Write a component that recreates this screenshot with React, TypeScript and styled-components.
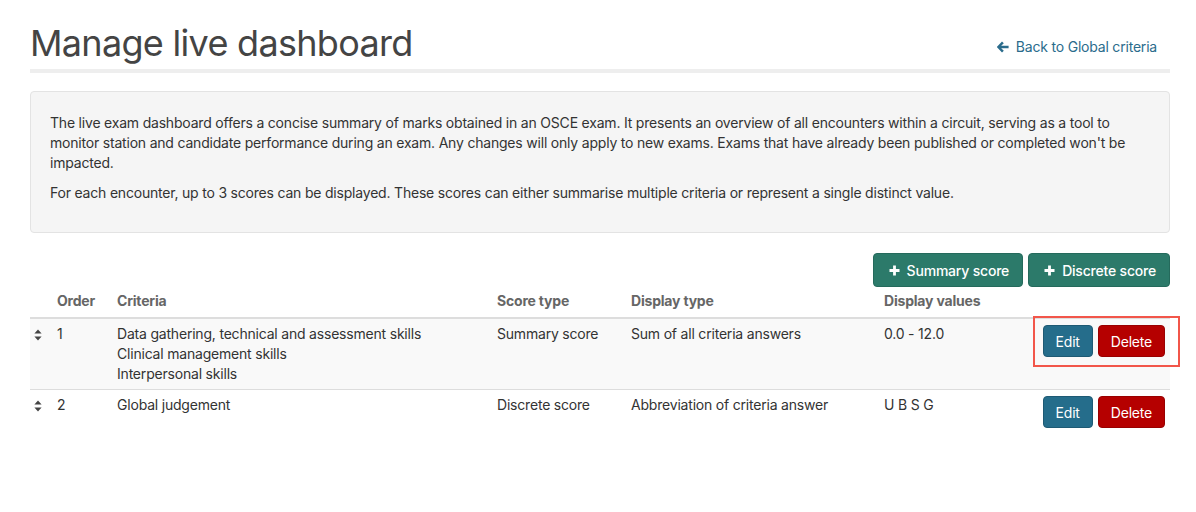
import * as React from "react"
import styled, { createGlobalStyle, css } from "styled-components"

const GlobalStyle = createGlobalStyle`
  html, body {
    margin: 0;
    padding: 0;
    background: #fff;
  }
  body {
    font-family: Inter, "Liberation Sans", Arial, sans-serif;
    font-size: 14px;
    letter-spacing: -0.2px;
    color: #333;
  }
`

const Page = styled.div`
  width: 1140px;
  padding: 22px 30px 0;
`

const Header = styled.div`
  display: flex;
  align-items: flex-end;
  justify-content: space-between;
  padding-bottom: 5px;
  border-bottom: 4px solid #eeeeee;
`

const Title = styled.h1`
  margin: 0;
  font-size: 36px;
  font-weight: 400;
  letter-spacing: -0.7px;
  color: #444;
  line-height: 42px;
`

const BackLink = styled.a`
  display: flex;
  align-items: center;
  gap: 7px;
  margin-right: 13px;
  margin-bottom: 9px;
  color: #2b6c8c;
  font-size: 14px;
  text-decoration: none;
`

const InfoBox = styled.div`
  margin-top: 18px;
  padding: 21px 19px 19px;
  background: #f5f5f5;
  border: 1px solid #e3e3e3;
  border-radius: 4px;
  min-height: 98px;

  p {
    margin: 0 0 10px;
    line-height: 20px;
  }
`

const Toolbar = styled.div`
  display: flex;
  justify-content: flex-end;
  gap: 5px;
  margin-top: 20px;
`

type Tone = "green" | "blue" | "red"

const tones: Record<Tone, { bg: string; border: string }> = {
  green: { bg: "#2c7a6a", border: "#256a5c" },
  blue: { bg: "#256d8b", border: "#1e5a74" },
  red: { bg: "#b50000", border: "#990000" },
}

const Button = styled.button<{ tone: Tone; tall?: boolean }>`
  display: inline-flex;
  align-items: center;
  justify-content: center;
  gap: 7px;
  font-family: inherit;
  font-size: 14px;
  letter-spacing: inherit;
  color: #fff;
  border-radius: 4px;
  cursor: pointer;
  ${({ tone }) => css`
    background: ${tones[tone].bg};
    border: 1px solid ${tones[tone].border};
  `}
  ${({ tall }) =>
    tall
      ? css`
          height: 34px;
          padding: 0 13px 0 15px;
          font-weight: 500;
        `
      : css`
          height: 32px;
          padding: 0 12px;
        `}
`

const Table = styled.table`
  width: 100%;
  border-collapse: collapse;
`

const Th = styled.th`
  text-align: left;
  font-weight: 700;
  color: #666;
  padding: 4px 8px 6px;
  border-bottom: 2px solid #dddddd;
  line-height: 20px;
`

const Row = styled.tr<{ shaded?: boolean }>`
  background: ${({ shaded }) => (shaded ? "#f9f9f9" : "#fff")};
  border-bottom: 1px solid #dddddd;
  &:last-child {
    border-bottom: none;
  }
`

const Td = styled.td`
  vertical-align: top;
  padding: 5px 8px;
  line-height: 20px;
  color: #333;
`

const HandleCell = styled(Td)`
  width: 11px;
  padding: 7px 0 0 4px;
`

const ActionCell = styled(Td)`
  padding: 6px 5px 10px 0;
  text-align: right;
  white-space: nowrap;
`

const Actions = styled.div`
  position: relative;
  display: inline-flex;
  gap: 5px;
`

const Highlight = styled.div`
  position: absolute;
  top: -9px;
  left: -10px;
  right: -15px;
  bottom: -10px;
  border: 2px solid #f2564a;
  pointer-events: none;
`

const SortIcon = () => (
  <svg width="8" height="12" viewBox="0 0 8 12">
    <path d="M4 0.5 L7.6 4.6 H0.4 Z" fill="#444" />
    <path d="M4 11.5 L7.6 7.4 H0.4 Z" fill="#444" />
  </svg>
)

const ArrowLeft = () => (
  <svg width="12" height="12" viewBox="0 0 12 12">
    <path
      d="M5 0.4 L6.8 2.2 L4.2 4.7 H11.6 V7.3 H4.2 L6.8 9.8 L5 11.6 L-0.2 6 Z"
      fill="#2b6c8c"
    />
  </svg>
)

const Plus = () => (
  <svg width="11" height="11" viewBox="0 0 11 11">
    <path d="M5.5 0.5 V10.5 M0.5 5.5 H10.5" stroke="#fff" strokeWidth="2.8" />
  </svg>
)

interface Score {
  order: number
  criteria: string[]
  scoreType: string
  displayType: string
  displayValues: string
  highlighted?: boolean
}

const scores: Score[] = [
  {
    order: 1,
    criteria: [
      "Data gathering, technical and assessment skills",
      "Clinical management skills",
      "Interpersonal skills",
    ],
    scoreType: "Summary score",
    displayType: "Sum of all criteria answers",
    displayValues: "0.0 - 12.0",
    highlighted: true,
  },
  {
    order: 2,
    criteria: ["Global judgement"],
    scoreType: "Discrete score",
    displayType: "Abbreviation of criteria answer",
    displayValues: "U B S G",
  },
]

const App = () => (
  <>
    <GlobalStyle />
    <Page>
      <Header>
        <Title>Manage live dashboard</Title>
        <BackLink href="#">
          <ArrowLeft />
          Back to Global criteria
        </BackLink>
      </Header>
      <InfoBox>
        <p>
          The live exam dashboard offers a concise summary of marks obtained in an OSCE exam. It presents an
          overview of all encounters within a circuit, serving as a tool to monitor station and candidate
          performance during an exam. Any changes will only apply to new exams. Exams that have already been
          published or completed won't be impacted.
        </p>
        <p>
          For each encounter, up to 3 scores can be displayed. These scores can either summarise multiple
          criteria or represent a single distinct value.
        </p>
      </InfoBox>
      <Toolbar>
        <Button tone="green" tall>
          <Plus />
          Summary score
        </Button>
        <Button tone="green" tall>
          <Plus />
          Discrete score
        </Button>
      </Toolbar>
      <Table>
        <thead>
          <tr>
            <Th style={{ width: 3 }} />
            <Th style={{ width: 44 }}>Order</Th>
            <Th style={{ width: 364 }}>Criteria</Th>
            <Th style={{ width: 118 }}>Score type</Th>
            <Th style={{ width: 237 }}>Display type</Th>
            <Th>Display values</Th>
            <Th />
          </tr>
        </thead>
        <tbody>
          {scores.map((s, i) => (
            <Row key={s.order} shaded={i === 0}>
              <HandleCell>
                <SortIcon />
              </HandleCell>
              <Td>{s.order}</Td>
              <Td>
                {s.criteria.map((c) => (
                  <div key={c}>{c}</div>
                ))}
              </Td>
              <Td>{s.scoreType}</Td>
              <Td>{s.displayType}</Td>
              <Td>{s.displayValues}</Td>
              <ActionCell>
                <Actions>
                  <Button tone="blue">Edit</Button>
                  <Button tone="red">Delete</Button>
                  {s.highlighted && <Highlight />}
                </Actions>
              </ActionCell>
            </Row>
          ))}
        </tbody>
      </Table>
    </Page>
  </>
)

export default App
